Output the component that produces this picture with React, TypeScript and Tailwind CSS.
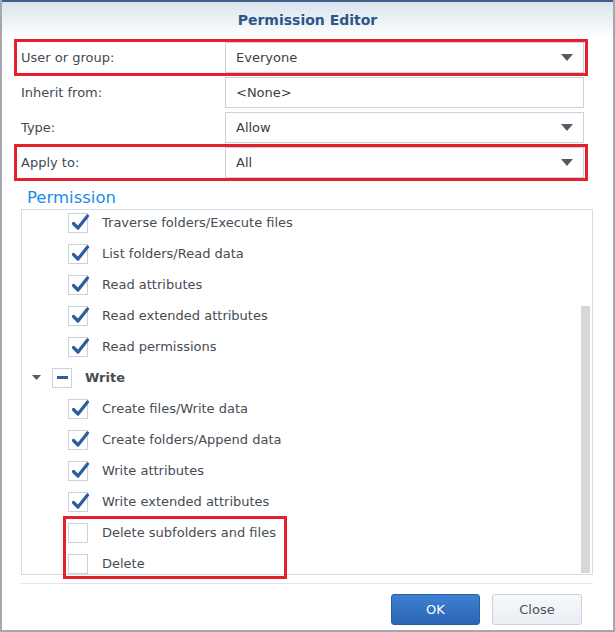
import React from "react";

type Item = { label: string; checked: boolean };

const readItems: Item[] = [
  { label: "Traverse folders/Execute files", checked: true },
  { label: "List folders/Read data", checked: true },
  { label: "Read attributes", checked: true },
  { label: "Read extended attributes", checked: true },
  { label: "Read permissions", checked: true },
];

const writeItems: Item[] = [
  { label: "Create files/Write data", checked: true },
  { label: "Create folders/Append data", checked: true },
  { label: "Write attributes", checked: true },
  { label: "Write extended attributes", checked: true },
  { label: "Delete subfolders and files", checked: false },
  { label: "Delete", checked: false },
];

const Caret = () => (
  <svg width="12" height="7" viewBox="0 0 12 7" className="shrink-0">
    <path d="M0 0h12L6 7z" fill="#555b62" />
  </svg>
);

const Field = ({ value, select }: { value: string; select?: boolean }) => (
  <div className="flex h-[31px] items-center justify-between border border-[#c9d3dd] bg-white pl-[10px] pr-[10px] text-[#3b3f44]">
    <span>{value}</span>
    {select && <Caret />}
  </div>
);

const Row = ({
  label,
  value,
  select,
  marked,
}: {
  label: string;
  value: string;
  select?: boolean;
  marked?: boolean;
}) => (
  <div className="relative grid grid-cols-[204px_1fr] items-center">
    <span className="text-[#414a53]">{label}</span>
    <Field value={value} select={select} />
    {marked && (
      <span className="pointer-events-none absolute -bottom-[3px] -left-[7px] -right-[4px] -top-[3px] border-[3px] border-[#e4202c]" />
    )}
  </div>
);

const CheckBox = ({ checked }: { checked: boolean }) => (
  <span className="relative flex h-[20px] w-[20px] shrink-0 items-center justify-center border border-[#c9d1da] bg-white">
    {checked && (
      <svg
        width="20"
        height="20"
        viewBox="0 0 20 20"
        className="absolute -top-[2px] left-[1px]"
      >
        <path
          d="M3.5 11.5 L8 16 L17.5 4"
          fill="none"
          stroke="#2c5e9c"
          strokeWidth="3.2"
          strokeLinecap="round"
          strokeLinejoin="round"
        />
      </svg>
    )}
  </span>
);

const TreeRow = ({ item }: { item: Item }) => (
  <div className="flex h-[31px] items-center pl-[46px]">
    <CheckBox checked={item.checked} />
    <span className="ml-[14px] text-[#454c54]">{item.label}</span>
  </div>
);

export default function App() {
  return (
    <div className="relative flex h-[632px] w-[615px] flex-col overflow-hidden border-x-2 border-b-2 border-[#a5a8ab] bg-white font-['DejaVu_Sans',sans-serif] text-[13px]">
      <div className="flex h-[38px] shrink-0 items-center justify-center border-t-2 border-[#3d5f8a] bg-gradient-to-b from-[#d9e3ec] to-white">
        <h1 className="text-[14px] font-bold text-[#2c5887]">Permission Editor</h1>
      </div>

      <div className="flex flex-col gap-[4px] pl-[19px] pr-[29px] pt-[4px]">
        <Row label="User or group:" value="Everyone" select marked />
        <Row label="Inherit from:" value="<None>" />
        <Row label="Type:" value="Allow" select />
        <Row label="Apply to:" value="All" select marked />
      </div>

      <div className="pl-[25px] pt-[9px] text-[16.5px] leading-[22px] text-[#1a8be9]">
        Permission
      </div>

      <div className="ml-[19px] mr-[20px] flex h-[366px] border border-[#d3dde8]">
        <div className="-mt-[3px] flex-1 overflow-hidden">
          {readItems.map((item) => (
            <TreeRow key={item.label} item={item} />
          ))}
          <div className="flex h-[31px] items-center pl-[10px]">
            <svg width="9" height="5" viewBox="0 0 9 5">
              <path d="M0 0h9L4.5 5z" fill="#555b62" />
            </svg>
            <span className="ml-[11px] flex h-[20px] w-[20px] items-center justify-center border border-[#c9d1da] bg-white">
              <span className="h-[3px] w-[11px] bg-[#2c5e9c]" />
            </span>
            <span className="ml-[13px] font-bold text-[#454c54]">Write</span>
          </div>
          {writeItems.map((item) => (
            <TreeRow key={item.label} item={item} />
          ))}
        </div>
        <div className="flex w-[12px] flex-col pb-[1px] pl-[1px] pr-[2px] pt-[96px]">
          <div className="flex-1 bg-[#d7d7d7]" />
        </div>
      </div>

      <div className="ml-[19px] mr-[20px] mt-[8px] border-t border-[#e2e5e8]" />

      <div className="flex justify-end gap-[12px] pr-[31px] pt-[10px]">
        <button className="h-[31px] w-[89px] rounded-[3px] border border-[#2a5f9f] bg-gradient-to-b from-[#3d80d3] to-[#2b66b4] text-[13px] text-white">
          OK
        </button>
        <button className="h-[31px] w-[90px] rounded-[3px] border border-[#c9d2dc] bg-gradient-to-b from-[#f6f8fa] to-[#eaeff4] text-[13px] text-[#4b525a]">
          Close
        </button>
      </div>

      <span className="pointer-events-none absolute left-[61px] top-[516px] h-[63px] w-[224px] border-[3px] border-[#e4202c]" />
    </div>
  );
}
